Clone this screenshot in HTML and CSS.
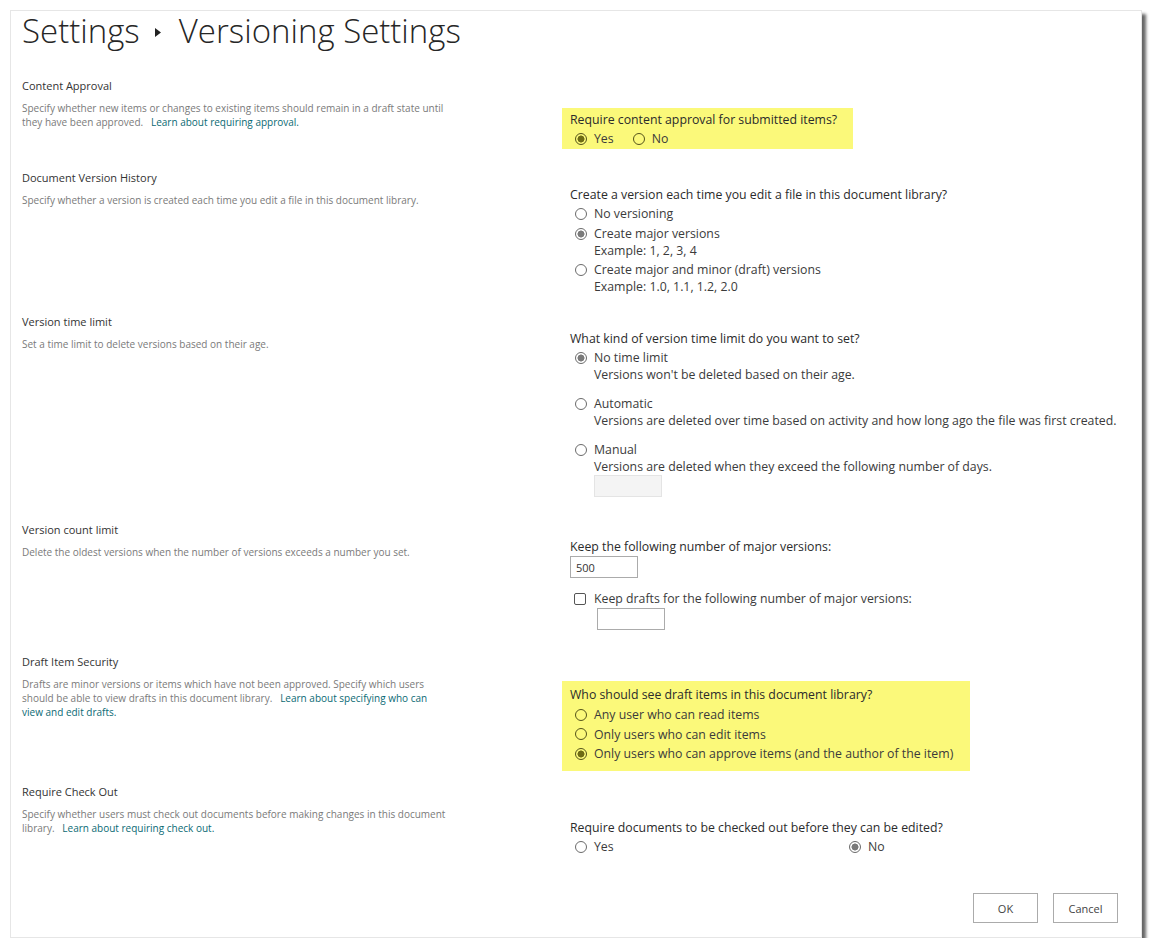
FILE: index.html
```html
<!DOCTYPE html>
<html lang="en">
<head>
<meta charset="utf-8">
<title>Versioning Settings</title>
<link rel="stylesheet" href="styles.css">
</head>
<body>
<div class="panel">
  <h1 class="title">Settings <svg class="crumb" width="6" height="9" viewBox="0 0 6 9"><path d="M0 0 L6 4.5 L0 9 Z" fill="#222"/></svg> Versioning Settings</h1>

  <section class="sec s1">
    <div class="left">
      <div class="label">Content Approval</div>
      <div class="desc">Specify whether new items or changes to existing items should remain in a draft state until<br>they have been approved.&nbsp;&nbsp;&nbsp;<a href="#">Learn about requiring approval.</a></div>
    </div>
    <div class="right">
      <div class="hl hl1">
        <div class="q">Require content approval for submitted items?</div>
        <div class="inline-opts">
          <label class="opt"><input type="radio" name="ca" checked><span>Yes</span></label>
          <label class="opt"><input type="radio" name="ca"><span>No</span></label>
        </div>
      </div>
    </div>
  </section>

  <section class="sec s2">
    <div class="left">
      <div class="label">Document Version History</div>
      <div class="desc">Specify whether a version is created each time you edit a file in this document library.</div>
    </div>
    <div class="right pad">
      <div class="q">Create a version each time you edit a file in this document library?</div>
      <label class="opt row"><input type="radio" name="vh"><span>No versioning</span></label>
      <label class="opt row mt1"><input type="radio" name="vh" checked><span>Create major versions</span></label>
      <div class="sub mb1">Example: 1, 2, 3, 4</div>
      <label class="opt row"><input type="radio" name="vh"><span>Create major and minor (draft) versions</span></label>
      <div class="sub">Example: 1.0, 1.1, 1.2, 2.0</div>
    </div>
  </section>

  <section class="sec s3">
    <div class="left">
      <div class="label">Version time limit</div>
      <div class="desc">Set a time limit to delete versions based on their age.</div>
    </div>
    <div class="right pad">
      <div class="q">What kind of version time limit do you want to set?</div>
      <div class="group">
        <label class="opt row"><input type="radio" name="tl" checked><span>No time limit</span></label>
        <div class="sub">Versions won't be deleted based on their age.</div>
      </div>
      <div class="group gap">
        <label class="opt row"><input type="radio" name="tl"><span>Automatic</span></label>
        <div class="sub">Versions are deleted over time based on activity and how long ago the file was first created.</div>
      </div>
      <div class="group gap">
        <label class="opt row"><input type="radio" name="tl"><span>Manual</span></label>
        <div class="sub">Versions are deleted when they exceed the following number of days.</div>
        <input class="box disabled days" type="text" disabled>
      </div>
    </div>
  </section>

  <section class="sec s4">
    <div class="left">
      <div class="label">Version count limit</div>
      <div class="desc">Delete the oldest versions when the number of versions exceeds a number you set.</div>
    </div>
    <div class="right pad">
      <div class="q">Keep the following number of major versions:</div>
      <input class="box" type="text" value="500">
      <label class="chk"><input type="checkbox"><span>Keep drafts for the following number of major versions:</span></label>
      <input class="box drafts" type="text">
    </div>
  </section>

  <section class="sec s5">
    <div class="left">
      <div class="label">Draft Item Security</div>
      <div class="desc">Drafts are minor versions or items which have not been approved. Specify which users<br>should be able to view drafts in this document library.&nbsp;&nbsp;&nbsp;<a href="#">Learn about specifying who can<br>view and edit drafts.</a></div>
    </div>
    <div class="right">
      <div class="hl hl2">
        <div class="q">Who should see draft items in this document library?</div>
        <label class="opt row r2"><input type="radio" name="ds"><span>Any user who can read items</span></label>
        <label class="opt row r2"><input type="radio" name="ds"><span>Only users who can edit items</span></label>
        <label class="opt row r2"><input type="radio" name="ds" checked><span>Only users who can approve items (and the author of the item)</span></label>
      </div>
    </div>
  </section>

  <section class="sec s6">
    <div class="left">
      <div class="label">Require Check Out</div>
      <div class="desc">Specify whether users must check out documents before making changes in this document<br>library.&nbsp;&nbsp;&nbsp;<a href="#">Learn about requiring check out.</a></div>
    </div>
    <div class="right pad">
      <div class="q">Require documents to be checked out before they can be edited?</div>
      <div class="cols">
        <label class="opt row cell"><input type="radio" name="co"><span>Yes</span></label>
        <label class="opt row cell"><input type="radio" name="co" checked><span>No</span></label>
      </div>
    </div>
  </section>

  <div class="footer">
    <button class="btn" type="button">OK</button>
    <button class="btn" type="button">Cancel</button>
  </div>
</div>
</body>
</html>
```

FILE: styles.css
```css
html, body {
  margin: 0;
  padding: 0;
  background: #ffffff;
}
body {
  font-family: "Open Sans", "Liberation Sans", sans-serif;
  color: #333;
}
.panel {
  box-sizing: border-box;
  margin: 10px 0 0 10px;
  width: 1132px;
  height: 928px;
  background: #fff;
  border: 1px solid #e6e6e6;
  box-shadow: 4px 4px 3px rgba(0, 0, 0, 0.6);
  padding: 0 23px 0 11px;
}
.title {
  margin: 0 0 27px 0;
  font-weight: 300;
  font-size: 33px;
  line-height: 40px;
  color: #262626;
  letter-spacing: 0;
}
.crumb {
  display: inline-block;
  vertical-align: middle;
  margin: 0 9px 0 7px;
  position: relative;
  top: -2px;
}
.sec {
  display: grid;
  grid-template-columns: 540px 1fr;
}
.s1 { height: 92px; }
.s2 { height: 144px; }
.s3 { height: 208px; }
.s4 { height: 132px; }
.s5 { height: 130px; }
.s6 { height: 109px; }

.label {
  font-size: 11px;
  line-height: 16px;
  color: #333;
}
.desc {
  margin-top: 7px;
  font-size: 10px;
  line-height: 14px;
  color: #7a7a7a;
  white-space: nowrap;
}
.desc a {
  color: #0a6a74;
  text-decoration: none;
}
.right {
  font-size: 12.3px;
  color: #333;
}
.right.pad { padding-left: 8px; padding-top: 15px; }
.s6 .right.pad { padding-top: 34px; }
.s1 .right { padding-top: 30px; }
.s5 .right { padding-top: 27px; }

.q {
  line-height: 19px;
  color: #2b2b2b;
}
.hl {
  background: #fbf97a;
  box-sizing: border-box;
  padding-left: 8px;
}
.hl1 { width: 291px; height: 41px; padding-top: 2px; }
.hl2 { width: 408px; height: 90px; padding-top: 4px; }
.hl2 .q { line-height: 20px; }

.opt {
  display: flex;
  align-items: center;
  gap: 7px;
  color: #3b3b3b;
  line-height: 19px;
}
.row { padding-left: 5px; }
.r2 { line-height: 19.5px; }
.mt1 { margin-top: 1px; }
.inline-opts {
  display: flex;
  gap: 19px;
  padding-left: 5px;
  line-height: 20px;
}
.sub {
  padding-left: 24px;
  line-height: 17px;
  margin-top: -1px;
  color: #3b3b3b;
}
.sub.mb1 { margin-bottom: 1px; }
.group.gap { margin-top: 11px; }

input[type="radio"] {
  appearance: none;
  -webkit-appearance: none;
  margin: 0;
  width: 12px;
  height: 12px;
  border: 1px solid #6b6b6b;
  border-radius: 50%;
  box-sizing: border-box;
  background: transparent;
  flex: none;
}
input[type="radio"]:checked {
  background: radial-gradient(circle, #7a7a7a 0 3.2px, transparent 3.8px);
}
.hl input[type="radio"] {
  border-color: #55541a;
}
.hl input[type="radio"]:checked {
  background: radial-gradient(circle, #6e6c14 0 3.2px, transparent 3.8px);
}

.box {
  display: block;
  box-sizing: border-box;
  width: 68px;
  height: 22px;
  margin: 0;
  border: 1px solid #ababab;
  background: #fff;
  font-family: "Open Sans", "Liberation Sans", sans-serif;
  font-size: 11px;
  color: #333;
  padding: 0 5px;
}
.box.days {
  margin-left: 24px;
  background: #f4f4f4;
  border-color: #e4e4e4;
}
.box.drafts { margin-left: 27px; }

.chk {
  display: flex;
  align-items: center;
  gap: 8px;
  margin-top: 11px;
  padding-left: 4px;
  line-height: 19px;
  color: #3b3b3b;
}
input[type="checkbox"] {
  appearance: none;
  -webkit-appearance: none;
  margin: 0;
  width: 12px;
  height: 12px;
  border: 1px solid #555;
  border-radius: 2px;
  box-sizing: border-box;
  background: #fff;
  flex: none;
}

.cols {
  display: grid;
  grid-template-columns: 274px 1fr;
}

.footer {
  display: flex;
  justify-content: flex-end;
  gap: 15px;
  padding-right: 0;
}
.btn {
  box-sizing: border-box;
  width: 65px;
  height: 30px;
  border: 1px solid #ababab;
  background: #fff;
  font-family: "Open Sans", "Liberation Sans", sans-serif;
  font-size: 11px;
  color: #444;
  padding: 0;
}
```
